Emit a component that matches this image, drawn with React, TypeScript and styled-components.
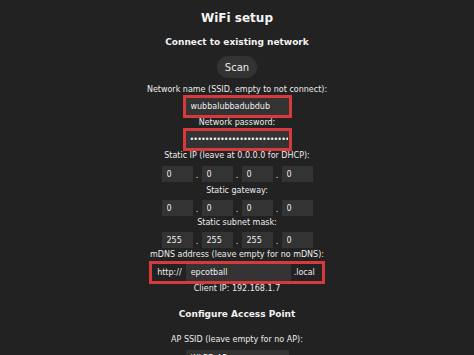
import React from "react";
import styled, { createGlobalStyle } from "styled-components";

const Global = createGlobalStyle`
  html, body { margin: 0; padding: 0; background: #222222; }
  body {
    font-family: "DejaVu Sans", Verdana, sans-serif;
    color: #eeeeee;
    width: 474px;
    height: 355px;
    overflow: hidden;
  }
`;

const Page = styled.div`
  display: flex;
  flex-direction: column;
  align-items: center;
  text-align: center;
  padding-top: 11px;
`;

const Title = styled.h1`
  margin: 0;
  font-size: 12px;
  line-height: 14px;
  font-weight: bold;
  color: #f6f6f6;
`;

const Section = styled.h2<{ $mt: number }>`
  margin: ${(p) => p.$mt}px 0 0;
  font-size: 9px;
  line-height: 11px;
  font-weight: bold;
  color: #f2f2f2;
`;

const ScanButton = styled.button`
  margin-top: 8px;
  width: 40px;
  height: 22px;
  border: none;
  border-radius: 11px;
  background: #333333;
  color: #ececec;
  font-family: inherit;
  font-size: 10px;
  padding: 0;
`;

const Label = styled.div<{ $mt: number }>`
  margin-top: ${(p) => p.$mt}px;
  font-size: 8px;
  line-height: 10px;
  color: #ececec;
  white-space: nowrap;
`;

const Field = styled.input<{ $mt?: number; $hl?: boolean; $w?: number; $secret?: boolean }>`
  box-sizing: border-box;
  margin: ${(p) => p.$mt ?? 0}px 0 0;
  width: ${(p) => p.$w ?? 103}px;
  height: 17px;
  padding: ${(p) => (p.$secret ? "0 1px 0 4px" : "0 5px")};
  border: none;
  background: #333333;
  color: #efefef;
  font-family: inherit;
  font-size: 8px;
  letter-spacing: ${(p) => (p.$secret ? "-0.9px" : "normal")};
  outline: ${(p) => (p.$hl ? "3px solid #d63a3c" : "none")};
`;

const IpRow = styled.div<{ $mt: number }>`
  margin-top: ${(p) => p.$mt}px;
  display: flex;
  align-items: center;
  height: 16px;
`;

const IpField = styled.input`
  box-sizing: border-box;
  width: 31px;
  height: 16px;
  padding: 0 5px;
  border: none;
  background: #333333;
  color: #efefef;
  font-family: inherit;
  font-size: 8px;
  outline: none;
`;

const Dot = styled.span`
  width: 9px;
  font-size: 8px;
  line-height: 10px;
  margin-top: 4px;
  text-align: center;
  color: #ececec;
`;

const DnsRow = styled.div<{ $mt: number }>`
  margin-top: ${(p) => p.$mt}px;
  display: flex;
  align-items: center;
  height: 17px;
  padding: 0 7px 0 5px;
  border: 3px solid #d63a3c;
  font-size: 8px;
  color: #ececec;
  gap: 4px;
`;

const Suffix = styled.span`
  margin-left: -1px;
`;

const ipGroups: { label: string; mt: number; rowMt: number; values: string[] }[] = [
  { label: "Static IP (leave at 0.0.0.0 for DHCP):", mt: 3, rowMt: 5, values: ["0", "0", "0", "0"] },
  { label: "Static gateway:", mt: 4, rowMt: 4, values: ["0", "0", "0", "0"] },
  { label: "Static subnet mask:", mt: 2, rowMt: 4, values: ["255", "255", "255", "0"] },
];

export default function App() {
  return (
    <>
      <Global />
      <Page>
        <Title>WiFi setup</Title>
        <Section $mt={12}>Connect to existing network</Section>
        <ScanButton>Scan</ScanButton>
        <Label $mt={7}>Network name (SSID, empty to not connect):</Label>
        <Field $mt={3} $hl readOnly value="wubbalubbadubdub" />
        <Label $mt={3}>Network password:</Label>
        <Field $mt={3} $hl $secret readOnly type="password" value="abcdefghijklmnopqrstuvwxyz0123" />
        {ipGroups.map((g) => (
          <React.Fragment key={g.label}>
            <Label $mt={g.mt}>{g.label}</Label>
            <IpRow $mt={g.rowMt}>
              {g.values.map((v, i) => (
                <React.Fragment key={i}>
                  {i > 0 && <Dot>.</Dot>}
                  <IpField readOnly value={v} />
                </React.Fragment>
              ))}
            </IpRow>
          </React.Fragment>
        ))}
        <Label $mt={2}>mDNS address (leave empty for no mDNS):</Label>
        <DnsRow $mt={1}>
          <span>http://</span>
          <Field $w={105} readOnly value="epcotball" />
          <Suffix>.local</Suffix>
        </DnsRow>
        <Label $mt={0}>Client IP: 192.168.1.7</Label>
        <Section $mt={15}>Configure Access Point</Section>
        <Label $mt={15}>AP SSID (leave empty for no AP):</Label>
        <Field $mt={5} readOnly value="WLED-AP" />
      </Page>
    </>
  );
}
